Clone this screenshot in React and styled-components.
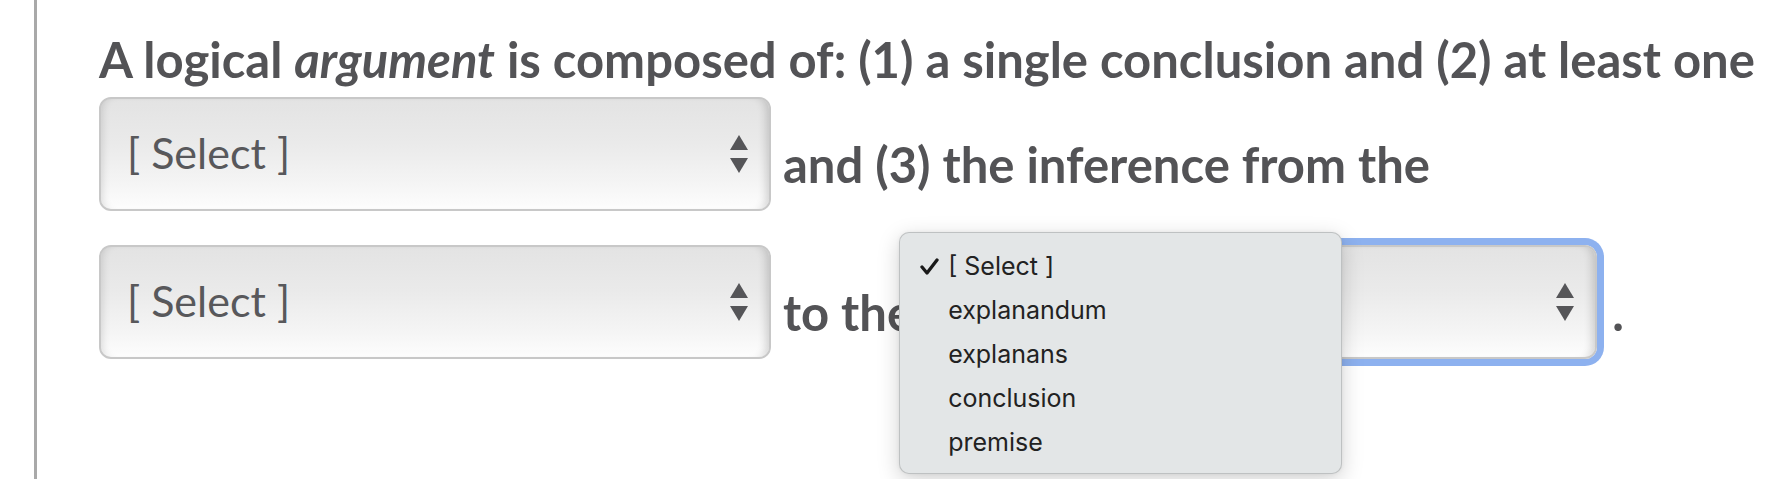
import React from "react";
import styled, { createGlobalStyle } from "styled-components";

const GlobalStyle = createGlobalStyle`
  html, body {
    margin: 0;
    padding: 0;
    background: #fff;
  }
  body {
    font-family: Lato, "Open Sans", sans-serif;
  }
`;

const Page = styled.div`
  margin-left: 34px;
  min-height: 100vh;
  border-left: 3px solid #a9a9a9;
  padding: 35px 0 0 62px;
  box-sizing: border-box;
  color: #535356;
  font-family: Lato, sans-serif;
  font-weight: 700;
  font-size: 49px;
`;

const Prompt = styled.div`
  line-height: 48px;
  white-space: nowrap;
  margin-bottom: 14px;

  & em {
    font-style: italic;
  }
`;

const Row = styled.div`
  display: flex;
  align-items: flex-start;
  white-space: nowrap;
  margin-bottom: ${({ $gap }) => $gap || 0}px;
`;

const Words = styled.span`
  line-height: 48px;
  padding-top: 43px;
  margin-left: ${({ $left }) => $left || 0}px;
  margin-right: ${({ $right }) => $right || 0}px;
`;

const SelectWrap = styled.div`
  position: relative;
  flex: 0 0 auto;
`;

const SelectBox = styled.div`
  width: 672px;
  height: 114px;
  box-sizing: border-box;
  display: flex;
  align-items: center;
  justify-content: space-between;
  padding: 0 21px 4px 26px;
  border: 2px solid #c8c8c8;
  border-radius: 12px;
  background: linear-gradient(
    to bottom,
    #e3e3e3 0%,
    #eaeaea 40%,
    #f4f4f4 75%,
    #fdfdfd 100%
  );
  box-shadow: inset 7px 0 8px -6px rgba(0, 0, 0, 0.14),
    inset -9px 0 8px -6px rgba(0, 0, 0, 0.16), inset 0 -3px 2px -1px #fff;
  font-family: Lato, sans-serif;
  font-weight: 400;
  font-size: 43px;
  color: #58585b;
  ${({ $focused }) =>
    $focused &&
    `
    box-shadow: inset 7px 0 8px -6px rgba(0, 0, 0, 0.14),
      inset -9px 0 8px -6px rgba(0, 0, 0, 0.16), inset 0 -3px 2px -1px #fff,
      0 0 0 7px #8db1ef;
  `}
`;

const Arrows = styled.div`
  display: flex;
  flex-direction: column;
  gap: 8px;
  margin-top: 4px;
`;

const Menu = styled.div`
  position: absolute;
  left: -26px;
  top: -13px;
  width: 443px;
  height: 242px;
  box-sizing: border-box;
  padding: 11px 0 12px;
  background: #e3e6e7;
  border: 1px solid rgba(0, 0, 0, 0.16);
  border-radius: 10px;
  box-shadow: 0 6px 22px rgba(0, 0, 0, 0.18), 0 0 4px rgba(0, 0, 0, 0.06);
  font-family: Inter, "Liberation Sans", sans-serif;
  font-weight: 400;
  font-size: 25px;
  color: #222;
  z-index: 2;
`;

const Item = styled.div`
  display: flex;
  align-items: center;
  height: 44px;
  line-height: 44px;
  padding-left: 20px;
`;

const Tick = styled.span`
  width: 28px;
  display: flex;
  align-items: center;
`;

const Period = styled.span`
  line-height: 48px;
  padding-top: 43px;
  margin-left: 15px;
`;

const options = ["[ Select ]", "explanandum", "explanans", "conclusion", "premise"];

const ArrowIcon = () => (
  <Arrows>
    <svg width="18" height="15" viewBox="0 0 18 15">
      <polygon points="9,0 18,15 0,15" fill="#555558" />
    </svg>
    <svg width="18" height="15" viewBox="0 0 18 15">
      <polygon points="0,0 18,0 9,15" fill="#555558" />
    </svg>
  </Arrows>
);

const Select = ({ focused, open }) => (
  <SelectWrap>
    <SelectBox $focused={focused}>
      <span>{focused ? "" : "[ Select ]"}</span>
      <ArrowIcon />
    </SelectBox>
    {open && (
      <Menu>
        {options.map((o, i) => (
          <Item key={o}>
            <Tick>
              {i === 0 && (
                <svg width="19" height="17" viewBox="0 0 19 17">
                  <polyline
                    points="2,9 7,15 17,2"
                    fill="none"
                    stroke="#1a1a1a"
                    strokeWidth="3.3"
                    strokeLinecap="round"
                    strokeLinejoin="round"
                  />
                </svg>
              )}
            </Tick>
            {o}
          </Item>
        ))}
      </Menu>
    )}
  </SelectWrap>
);

export default function App() {
  return (
    <>
      <GlobalStyle />
      <Page>
        <Prompt>
          A logical <em>argument</em> is composed of: (1) a single conclusion
          and (2) at least one
        </Prompt>
        <Row $gap={34}>
          <Select />
          <Words $left={12}>and (3) the inference from the</Words>
        </Row>
        <Row>
          <Select />
          <Words $left={12} $right={12}>
            to the
          </Words>
          <Select focused open />
          <Period>.</Period>
        </Row>
      </Page>
    </>
  );
}
